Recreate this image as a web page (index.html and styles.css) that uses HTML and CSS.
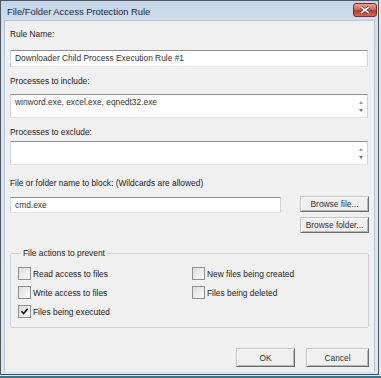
FILE: index.html
```html
<!DOCTYPE html>
<html>
<head>
<meta charset="utf-8">
<link rel="stylesheet" href="styles.css">
</head>
<body>
<div class="window">
  <div class="titlebar">
    <span class="title">File/Folder Access Protection Rule</span>
    <span class="close">
      <svg width="12" height="8" viewBox="0 0 12 8"><path d="M2 1 L10 7 M10 1 L2 7" stroke="#6a1c1c" stroke-width="3"/><path d="M2 1 L10 7 M10 1 L2 7" stroke="#fff" stroke-width="1.6"/></svg>
    </span>
  </div>
  <div class="client">
    <div class="label l-rule">Rule Name:</div>
    <div class="field single">Downloader Child Process Execution Rule #1</div>
    <div class="label l-inc">Processes to include:</div>
    <div class="field multi">
      <span class="mtext">winword.exe, excel.exe, eqnedt32.exe</span>
      <span class="spin"><span class="up"></span><span class="down"></span></span>
    </div>
    <div class="label l-exc">Processes to exclude:</div>
    <div class="field multi">
      <span class="mtext"></span>
      <span class="spin"><span class="up"></span><span class="down"></span></span>
    </div>
    <div class="label l-file">File or folder name to block: (Wildcards are allowed)</div>
    <div class="file-row">
      <div class="field single cmd">cmd.exe</div>
      <div class="browse">
        <div class="btn browse-btn">Browse file...</div>
        <div class="btn browse-btn">Browse folder...</div>
      </div>
    </div>
    <fieldset class="group">
      <legend>File actions to prevent</legend>
      <div class="checks">
        <div class="check"><span class="box"></span>Read access to files</div>
        <div class="check"><span class="box"></span>New files being created</div>
        <div class="check"><span class="box"></span>Write access to files</div>
        <div class="check"><span class="box"></span>Files being deleted</div>
        <div class="check"><span class="box"><svg width="9" height="9" viewBox="0 0 9 9"><path d="M1.5 4.2 L3.6 6.6 L7.6 1.8" fill="none" stroke="#111" stroke-width="1.5"/></svg></span>Files being executed</div>
      </div>
    </fieldset>
    <div class="actions">
      <div class="btn ok">OK</div>
      <div class="btn cancel">Cancel</div>
    </div>
  </div>
</div>
</body>
</html>
```
FILE: styles.css
```css
html, body {
  margin: 0;
  padding: 0;
  background: #dde6ee;
}
body {
  font-family: "Liberation Sans", Arial, sans-serif;
  font-size: 8.4px;
  color: #222;
  height: 378px;
  box-sizing: border-box;
  border-bottom: 2px solid #3b7388;
}
.window {
  width: 379px;
  height: 375px;
  box-sizing: border-box;
  border: 1px solid #50585f;
  border-bottom-color: #2d5566;
  background: linear-gradient(#c4d5e8, #d6e3f1 30px, #dbe6f2);
  display: flex;
  flex-direction: column;
  padding: 0 3px 2px 3px;
}
.titlebar {
  height: 19px;
  display: flex;
  align-items: center;
  justify-content: space-between;
  flex: none;
}
.title {
  font-size: 9.4px;
  color: #1b2433;
  padding-left: 3px;
  padding-top: 1px;
}
.close {
  width: 22px;
  height: 12px;
  margin-top: -2px;
  margin-right: -2px;
  border: 1px solid #7b2a2a;
  border-radius: 3px;
  background: linear-gradient(#e4a294, #cf6a5a 45%, #b8372a 55%, #d06a50);
  display: flex;
  align-items: center;
  justify-content: center;
}
.client {
  flex: 1;
  background: #f0f0f0;
  border: 1px solid #b7c4d3;
  border-bottom-color: #e8eef5;
  padding: 6px 5px 0 5px;
  display: flex;
  flex-direction: column;
}
.label {
  height: 14px;
  line-height: 14px;
  white-space: nowrap;
}
.field {
  box-sizing: border-box;
  background: #fff;
  border: 1px solid #cfd4da;
  border-top-color: #8f8f8f;
  border-bottom-color: #e2e6ea;
  color: #333;
  white-space: nowrap;
}
.single {
  height: 17px;
  line-height: 15px;
  padding-left: 4px;
  margin-right: 1px;
}
.multi {
  height: 24px;
  display: flex;
  margin-right: 1px;
}
.mtext {
  flex: 1;
  padding: 2px 0 0 4px;
  line-height: 11px;
}
.spin {
  width: 13px;
  display: flex;
  flex-direction: column;
  align-items: center;
  justify-content: space-around;
  padding: 3px 0 3px;
}
.up, .down {
  width: 0;
  height: 0;
  border-left: 2.5px solid transparent;
  border-right: 2.5px solid transparent;
}
.up { border-bottom: 3px solid #9aa2aa; }
.down { border-top: 3px solid #6c747c; }
.l-rule { margin-bottom: 9px; }
.l-inc { margin-top: 7px; margin-bottom: 6px; }
.l-exc { margin-top: 7px; margin-bottom: 2px; }
.l-file { margin-top: 11px; margin-bottom: 6px; }
.file-row {
  display: flex;
  justify-content: space-between;
  align-items: flex-start;
}
.cmd {
  width: 271px;
  height: 16px;
  line-height: 14px;
  margin-top: 1px;
}
.browse {
  display: flex;
  flex-direction: column;
  gap: 5px;
}
.btn {
  box-sizing: border-box;
  border: 1px solid;
  border-color: #c4c4c4 #6b6b6b #6b6b6b #c4c4c4;
  box-shadow: inset 1px 1px 0 #fff, inset -1px -1px 0 #b8b8b8;
  background: #efefef;
  display: flex;
  align-items: center;
  justify-content: center;
  color: #333;
  white-space: nowrap;
}
.browse-btn {
  width: 69px;
  height: 16px;
}
.group {
  margin: 13px 0 0 0;
  padding: 4px 0 6px 7px;
  border: 1px solid #cbd1d7;
  border-radius: 2px;
}
.group legend {
  padding: 0 2px;
  margin-left: 3px;
  height: 14px;
  line-height: 14px;
}
.checks {
  display: grid;
  grid-template-columns: 174px 1fr;
  grid-auto-rows: 19px;
}
.check {
  display: flex;
  align-items: center;
  gap: 2px;
  white-space: nowrap;
}
.box {
  width: 11px;
  height: 11px;
  border: 1px solid #8e8f8f;
  background: linear-gradient(135deg, #dcdcdc, #fbfbfb);
  display: inline-flex;
  align-items: center;
  justify-content: center;
}
.actions {
  display: flex;
  justify-content: flex-end;
  gap: 11px;
  margin-top: 20px;
}
.ok {
  width: 59px;
  height: 19px;
}
.cancel {
  width: 63px;
  height: 19px;
}
```
